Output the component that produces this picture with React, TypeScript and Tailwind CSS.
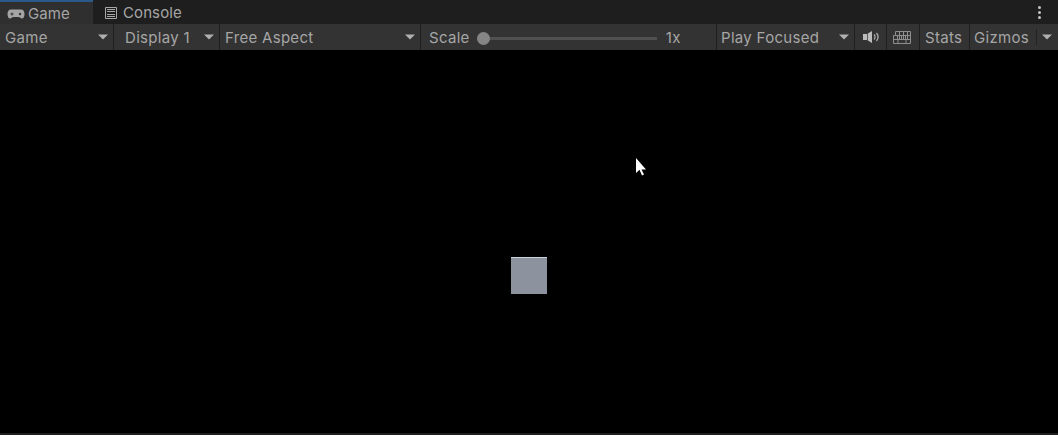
const font = "[font-family:Inter,'Noto_Sans',sans-serif]";

function Caret() {
  return (
    <svg width="10" height="6" viewBox="0 0 10 6" className="mt-[-1px] shrink-0">
      <path d="M0 0.500h10L5 5.500z" fill="#b0b0b0" />
    </svg>
  );
}

function GamepadIcon() {
  return (
    <svg width="18" height="10" viewBox="0 0 18 10" className="mt-[1px] shrink-0">
      <path
        d="M4 0.500h10c2.200 0 3.500 1.800 3.500 4.500S16.500 9.500 15 9.500c-1.400 0-2-1.600-3.500-1.600h-5C5 7.900 4.400 9.500 3 9.500 1.500 9.500 .5 7.700 .5 5S1.800 .5 4 .5z"
        fill="#a4a4a4"
      />
      <path d="M3.500 5h3M5 3.500v3" stroke="#333" strokeWidth="1" />
      <circle cx="13" cy="5" r="1.200" fill="#333" />
    </svg>
  );
}

function ConsoleIcon() {
  return (
    <svg width="12" height="12" viewBox="0 0 12 12" className="mt-[1px] shrink-0">
      <path d="M0.500 0.500h11v11h-11z" fill="none" stroke="#a8a8a8" />
      <path d="M2 2.500h8M2 4.500h8M2 7.500h8M2 9.500h8" stroke="#a8a8a8" strokeWidth="1" />
    </svg>
  );
}

function SpeakerIcon() {
  return (
    <svg width="16" height="12" viewBox="0 0 16 12">
      <path d="M0 3h4l5-3v12l-5-3H0z" fill="#bcbcbc" />
      <path d="M4.500 2.500v7" stroke="#333" strokeWidth="0.700" />
      <path d="M11 3.500a3.500 3.500 0 0 1 0 5M13.500 2a6.500 6.500 0 0 1 0 8" fill="none" stroke="#a8a8a8" strokeWidth="1.300" />
    </svg>
  );
}

function KeyboardIcon() {
  return (
    <svg width="18" height="13" viewBox="0 0 18 13" fill="none" stroke="#8e8e8e" strokeWidth="1" className="mr-[2px]">
      <path d="M2.500 0.500h15v12H0.500v-8h2z" />
      <path d="M2.500 4.500h15M0.500 8.500h17M6.500 0.500v8M10.500 0.500v8M14.500 0.500v8M4.500 4.500v4M8.500 4.500v4M12.500 4.500v4M5 8.500v4M13 8.500v4" />
    </svg>
  );
}

export default function App() {
  return (
    <div className={`flex h-[435px] w-[1058px] flex-col overflow-hidden bg-black text-[15px] tracking-[0.3px] text-[#a6a6a6] ${font}`}>
      <div className="flex h-6 shrink-0 bg-[#1e1e1e] tracking-[0.1px]">
        <div className="flex w-[93px] items-center gap-[3px] border-t-2 border-[#2a5a8a] bg-[#2f2f2f] pl-[7px]">
          <GamepadIcon />
          <span className="pt-[2px]">Game</span>
        </div>
        <div className="flex items-center gap-[6px] pl-3">
          <ConsoleIcon />
          <span className="pt-[2px]">Console</span>
        </div>
        <div className="ml-auto flex flex-col justify-center gap-[2px] pr-[17px]">
          <span className="h-[3px] w-[3px] rounded-full bg-[#c4c4c4]" />
          <span className="h-[3px] w-[3px] rounded-full bg-[#c4c4c4]" />
          <span className="h-[3px] w-[3px] rounded-full bg-[#c4c4c4]" />
        </div>
      </div>

      <div className="flex h-[26px] shrink-0 gap-px bg-[#1f1f1f]">
        <div className="flex w-[113px] items-center justify-between bg-[#333333] pl-[5px] pr-[5px]">
          <span className="pt-[2px]">Game</span>
          <Caret />
        </div>
        <div className="flex w-[105px] items-center justify-between bg-[#333333] pl-[11px] pr-[5px]">
          <span className="pt-[2px]">Display 1</span>
          <Caret />
        </div>
        <div className="flex w-[200px] items-center justify-between bg-[#333333] pl-[5px] pr-[5px]">
          <span className="pt-[2px]">Free Aspect</span>
          <Caret />
        </div>
        <div className="flex w-[295px] items-center bg-[#333333] pl-2">
          <span className="pt-[2px]">Scale</span>
          <div className="relative ml-[7px] mt-[2px] h-[3px] w-[180px] bg-[#505050]">
            <span className="absolute left-0 top-[-5px] h-[13px] w-[13px] rounded-full bg-[#858585]" />
          </div>
          <span className="ml-[9px] pt-[2px] tracking-[0.6px]">1x</span>
        </div>
        <div className="flex w-[137px] items-center justify-between bg-[#333333] pl-1 pr-[5px]">
          <span className="pt-[2px]">Play Focused</span>
          <Caret />
        </div>
        <div className="flex w-[31px] items-center justify-center bg-[#333333]">
          <SpeakerIcon />
        </div>
        <div className="flex w-[32px] items-center justify-center bg-[#333333]">
          <KeyboardIcon />
        </div>
        <div className="flex w-[49px] items-center bg-[#333333] pl-[5px]">
          <span className="pt-[2px]">Stats</span>
        </div>
        <div className="flex flex-1 items-center bg-[#333333] pl-1">
          <span className="pt-[2px]">Gizmos</span>
          <span className="ml-[7px] h-[16px] w-px bg-[#222222]" />
          <span className="ml-[5px]">
            <Caret />
          </span>
        </div>
      </div>

      <div className="flex flex-1 items-start justify-center bg-black">
        <div className="relative h-[37px] w-9 translate-y-[207px] border-t border-[#c9d3e0] bg-[#8c929e]" />
      </div>
      <div className="h-[2px] shrink-0 bg-[#1e1e1e]" />

      <svg width="13" height="20" viewBox="0 0 13 20" className="absolute left-[635px] top-[157px]">
        <path d="M1 1v15l3.500-3.200L7 18.500l2-1-2.500-5H11z" fill="#ffffff" />
      </svg>
    </div>
  );
}
